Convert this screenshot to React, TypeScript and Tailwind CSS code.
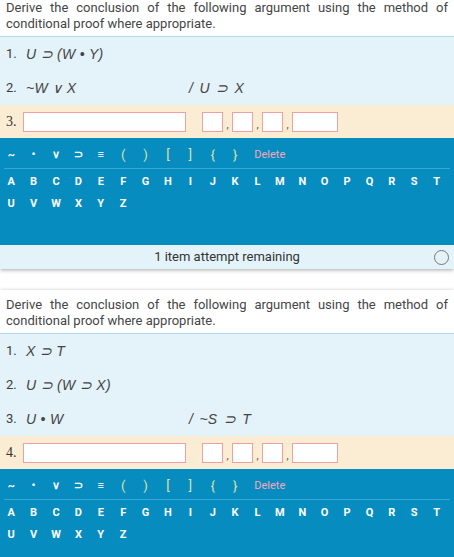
import React from "react";

type Premise = { formula: string; conclusion?: string };

type ProofItem = {
  premises: Premise[];
};

const PROBLEMS: ProofItem[] = [
  {
    premises: [
      { formula: "U ⊃ (W • Y)" },
      { formula: "~W ∨ X", conclusion: "/ U ⊃ X" },
    ],
  },
  {
    premises: [
      { formula: "X ⊃ T" },
      { formula: "U ⊃ (W ⊃ X)" },
      { formula: "U • W", conclusion: "/ ~S ⊃ T" },
    ],
  },
];

const OPERATORS = ["~", "•", "∨", "⊃", "≡"];
const BRACKETS = ["(", ")", "[", "]", "{", "}"];
const LETTERS = "ABCDEFGHIJKLMNOPQRSTUVWXYZ".split("");

const formulaFont = { fontFamily: '"Liberation Sans", Arial, sans-serif' };

const PremiseRow = ({ num, premise }: { num: number; premise: Premise }) => (
  <div className="flex h-[34px] items-center px-[6px] text-[13px] text-[#3c3c3c]">
    <span className="w-[20px]">{num}.</span>
    <span className="w-[163px] text-[14px] italic tracking-[0.3px] text-[#444]" style={formulaFont}>
      {premise.formula}
    </span>
    {premise.conclusion && (
      <span
        className="text-[14px] italic tracking-[0.3px] text-[#444] [word-spacing:2px]"
        style={formulaFont}
      >
        {premise.conclusion}
      </span>
    )}
  </div>
);

const Comma = () => (
  <span className="w-[9px] text-center text-[11px] leading-[14px] text-[#555]">,</span>
);

const AnswerRow = ({ num }: { num: number }) => (
  <div className="flex h-[33px] items-center bg-[#fbedd3] px-[6px]">
    <span className="w-[17px] font-['Liberation_Serif',serif] text-[14px] text-[#333]">
      {num}.
    </span>
    <div className="h-[20px] w-[163px] border border-[#f0a0a0] bg-white" />
    <div className="ml-[16px] flex items-end">
      <div className="h-[20px] w-[21px] border border-[#f0a0a0] bg-white" />
      <Comma />
      <div className="h-[20px] w-[21px] border border-[#f0a0a0] bg-white" />
      <Comma />
      <div className="h-[20px] w-[21px] border border-[#f0a0a0] bg-white" />
      <Comma />
      <div className="h-[20px] w-[46px] border border-[#f0a0a0] bg-white" />
    </div>
  </div>
);

const Keyboard = () => (
  <div className="bg-[#078cc0] pb-[30px] font-['Roboto',sans-serif] font-bold">
    <div className="grid h-[30px] grid-cols-[repeat(20,22.4px)] items-center pt-[4px] text-[11px]">
      {OPERATORS.map((k) => (
        <span key={k} className="text-center text-white">
          {k}
        </span>
      ))}
      {BRACKETS.map((k) => (
        <span key={k} className="text-center text-[13px] font-normal text-[#dfe2a4]">
          {k}
        </span>
      ))}
      <span className="col-span-3 pl-[8px] text-[11px] font-normal text-[#f3a7b8]">
        Delete
      </span>
    </div>
    <div className="mx-[4px] h-px bg-[#3aa6d2]" />
    <div className="grid grid-cols-[repeat(20,22.4px)] pt-[2px] text-[11px] leading-[22px] text-white">
      {LETTERS.map((l) => (
        <span key={l} className="text-center">
          {l}
        </span>
      ))}
    </div>
  </div>
);

const ProofCard = ({ item, showFooter }: { item: ProofItem; showFooter: boolean }) => {
  const answerNum = item.premises.length + 1;

  return (
    <div className="bg-white shadow-[0_1px_4px_rgba(0,0,0,0.35)]">
      <p className="border-b border-[#b3dbea] px-[6px] pb-[4px] pt-[7px] text-justify text-[13px] leading-[16px] text-[#454545]">
        Derive the conclusion of the following argument using the method of
        conditional proof where appropriate.
      </p>
      <div className="bg-[#e4f2f9]">
        {item.premises.map((p, i) => (
          <PremiseRow key={i} num={i + 1} premise={p} />
        ))}
      </div>
      <AnswerRow num={answerNum} />
      <Keyboard />
      {showFooter && (
        <div className="flex h-[24px] items-center bg-[#e4f2f9] px-[5px] text-[13px] text-[#333]">
          <div className="flex-1" />
          <span>1 item attempt remaining</span>
          <div className="flex flex-1 justify-end">
            <div className="h-[15px] w-[15px] rounded-full border-[1.5px] border-[#777]" />
          </div>
        </div>
      )}
    </div>
  );
};

export default function App() {
  return (
    <div className="h-[557px] w-[454px] overflow-hidden bg-white font-['Roboto',sans-serif]">
      <div className="-mt-[7px] flex flex-col gap-[21px]">
        <ProofCard item={PROBLEMS[0]} showFooter />
        <ProofCard item={PROBLEMS[1]} showFooter={false} />
      </div>
    </div>
  );
}
